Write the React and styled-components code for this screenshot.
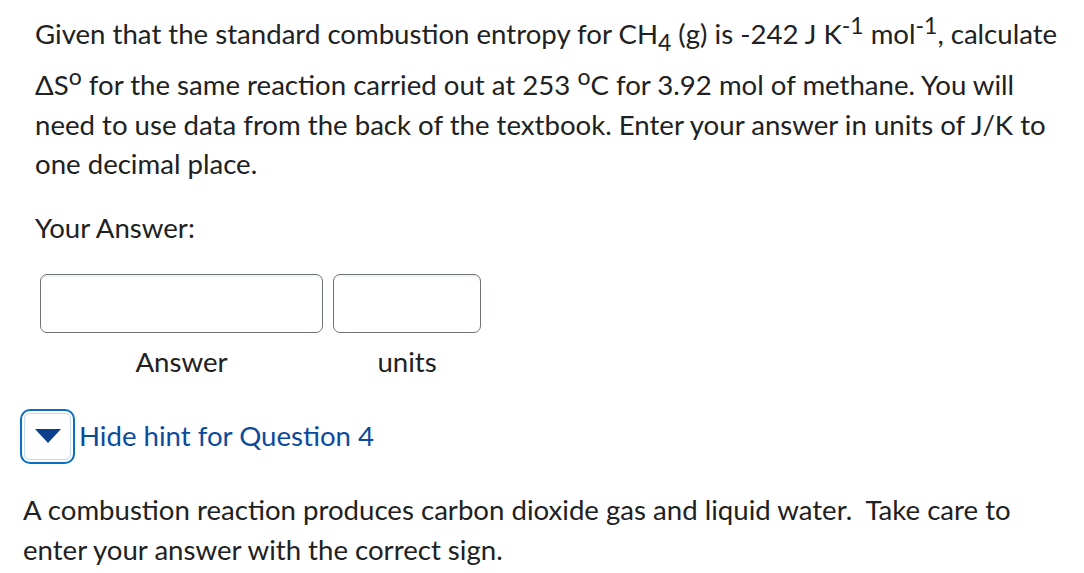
import React from 'react'
import styled, { createGlobalStyle } from 'styled-components'

const GlobalStyle = createGlobalStyle`
  body {
    margin: 0;
    background: #ffffff;
    font-family: Lato, "Open Sans", sans-serif;
    color: #202122;
  }
`

const Page = styled.div`
  padding: 14px 0 0 0;
  width: 1084px;
`

const Question = styled.div`
  padding-left: 35px;
  width: 1040px;
`

const Text = styled.p`
  margin: 0;
  font-size: 27.6px;
  line-height: 39.5px;
  sup {
    font-size: 23px;
    line-height: 1;
  }
  sub {
    display: inline-block;
    font-size: 23px;
    line-height: 1;
    vertical-align: -7px;
    margin-bottom: 11px;
  }
`

const Label = styled.p`
  margin: 24px 0 0 0;
  font-size: 27.6px;
  line-height: 40px;
`

const Fields = styled.div`
  display: grid;
  grid-template-columns: 283px 148px;
  column-gap: 10px;
  margin: 26px 0 0 5px;
`

const Field = styled.div`
  display: flex;
  flex-direction: column;
  align-items: center;
`

const Input = styled.input`
  box-sizing: border-box;
  width: 100%;
  height: 59px;
  border: 1.5px solid #6e7376;
  border-radius: 7px;
  background: #fff;
  box-shadow: inset 0 2px 0 #f1f3f5;
  outline: none;
`

const Caption = styled.span`
  margin-top: 11px;
  font-size: 27.6px;
  line-height: 36px;
`

const HintRow = styled.div`
  display: flex;
  align-items: center;
  gap: 4px;
  margin: 29px 0 0 20px;
`

const Toggle = styled.button`
  box-sizing: border-box;
  width: 55px;
  height: 55px;
  border: 2px solid #0a6fc2;
  border-radius: 10px;
  background: #fff;
  box-shadow: inset 0 0 0 2px #fff, inset 0 0 0 3px #c6def2;
  display: flex;
  align-items: center;
  justify-content: center;
  padding: 0;
`

const HintLink = styled.span`
  font-size: 27.6px;
  color: #0c4b9c;
  line-height: 40px;
`

const HintText = styled.p`
  margin: 26px 0 0 23px;
  width: 1040px;
  font-size: 27.6px;
  line-height: 40px;
  white-space: pre-wrap;
`

export default function App() {
  return (
    <Page>
      <GlobalStyle />
      <Question>
        <Text>
          Given that the standard combustion entropy for CH<sub>4</sub> (g) is -242 J K<sup>-1</sup> mol<sup>-1</sup>, calculate
          ΔS<sup>o</sup> for the same reaction carried out at 253 <sup>o</sup>C for 3.92 mol of methane. You will
          need to use data from the back of the textbook. Enter your answer in units of J/K to
          one decimal place.
        </Text>
        <Label>Your Answer:</Label>
        <Fields>
          <Field>
            <Input aria-label="Answer" />
            <Caption>Answer</Caption>
          </Field>
          <Field>
            <Input aria-label="units" />
            <Caption>units</Caption>
          </Field>
        </Fields>
      </Question>
      <HintRow>
        <Toggle aria-label="Hide hint">
          <svg width="26" height="14" viewBox="0 0 26 14">
            <path d="M0 0 L26 0 L13 14 Z" fill="#0a3f8c" />
          </svg>
        </Toggle>
        <HintLink>Hide hint for Question 4</HintLink>
      </HintRow>
      <HintText>{'A combustion reaction produces carbon dioxide gas and liquid water.  Take care to\nenter your answer with the correct sign.'}</HintText>
    </Page>
  )
}
